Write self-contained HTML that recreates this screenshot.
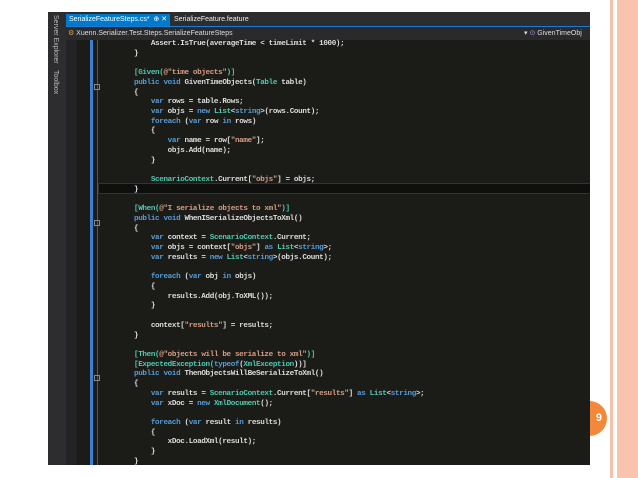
<!DOCTYPE html>
<html><head><style>
body{margin:0;width:638px;height:478px;background:#fff;position:relative;overflow:hidden;font-family:"Liberation Sans",sans-serif}
.s1{position:absolute;left:610px;top:0;width:3px;height:478px;background:#f6c0aa}
.s2{position:absolute;left:617px;top:0;width:21px;height:478px;background:#f9c3ad}
.circ{position:absolute;left:572px;top:401px;width:35px;height:35px;border-radius:50%;background:#f3883c;color:#fff;font:bold 11px "Liberation Sans";line-height:35px;text-align:right;box-sizing:border-box;padding-right:5px}
.shot{position:absolute;left:48px;top:12px;width:542px;height:453px;background:#1b1c18;overflow:hidden}
.top{position:absolute;left:0;top:0;width:542px;height:14px;background:#2d2d30}
.tab{position:absolute;left:18px;top:2px;width:104px;height:12px;background:#007acc;color:#fff;font-size:7px;line-height:12px;padding-left:3px;box-sizing:border-box}
.tab2{position:absolute;left:126px;top:2px;color:#eee;font-size:7px;line-height:12px}
.bl{position:absolute;left:18px;top:14px;width:524px;height:1px;background:#1c7bd0}
.nav{position:absolute;left:18px;top:15px;width:524px;height:13px;background:#2a2a2c;color:#ddd;font-size:7px;line-height:13px}
.side{position:absolute;left:0;top:0;width:18px;height:453px;background:#2d2d30}
.vt{position:absolute;left:4px;color:#bbb;font-size:7px;writing-mode:vertical-rl}
.mar{position:absolute;left:18px;top:28px;width:11px;height:425px;background:#232326}
.bar{position:absolute;left:42px;top:28px;width:3px;height:425px;background:#3c7fd4}
.ol{position:absolute;left:49px;top:28px;width:1px;height:425px;background:#555}
.cur{position:absolute;left:50px;top:171px;width:492px;height:9px;border:1px solid #333;background:#0f100e}
pre{position:absolute;left:86px;top:28px;margin:0;font:bold 7.6px/9.72px "Liberation Mono",monospace;letter-spacing:-0.35px;color:#dcdcdc}
.k{color:#569cd6}.s{color:#d69d85}.t{color:#4ec9b0}
.box{position:absolute;left:46px;width:6px;height:6px;border:1px solid #888;box-sizing:border-box}
</style></head><body>
<div class="s1"></div><div class="s2"></div>
<div class="circ">9</div>
<div class="shot">
<div class="top"></div>
<div class="tab">SerializeFeatureSteps.cs* &nbsp;⊕ ✕</div>
<div class="tab2">SerializeFeature.feature</div>
<div class="bl"></div>
<div class="nav">&nbsp;<span style="color:#d9a441">⚙</span> Xuenn.Serializer.Test.Steps.SerializeFeatureSteps<span style="position:absolute;left:458px">▾ <span style="color:#b48ee0">⊙</span> GivenTimeObj</span></div>
<div class="side"><div class="vt" style="top:3px">Server Explorer</div><div class="vt" style="top:58px">Toolbox</div></div>
<div class="mar"></div>
<div class="bar"></div><div class="ol"></div>
<div class="cur"></div>
<div class="box" style="top:72px"></div>
<div class="box" style="top:208px"></div>
<div class="box" style="top:363px"></div>
<pre>    Assert.IsTrue(averageTime &lt; timeLimit * 1000);
}

<span class="t">[Given(</span><span class="s">@"time objects"</span><span class="t">)]</span>
<span class="k">public void</span> GivenTimeObjects(<span class="t">Table</span> table)
{
    <span class="k">var</span> rows = table.Rows;
    <span class="k">var</span> objs = <span class="k">new</span> <span class="t">List</span>&lt;<span class="k">string</span>&gt;(rows.Count);
    <span class="k">foreach</span> (<span class="k">var</span> row <span class="k">in</span> rows)
    {
        <span class="k">var</span> name = row[<span class="s">"name"</span>];
        objs.Add(name);
    }

    <span class="t">ScenarioContext</span>.Current[<span class="s">"objs"</span>] = objs;
}

<span class="t">[When(</span><span class="s">@"I serialize objects to xml"</span><span class="t">)]</span>
<span class="k">public void</span> WhenISerializeObjectsToXml()
{
    <span class="k">var</span> context = <span class="t">ScenarioContext</span>.Current;
    <span class="k">var</span> objs = context[<span class="s">"objs"</span>] <span class="k">as</span> <span class="t">List</span>&lt;<span class="k">string</span>&gt;;
    <span class="k">var</span> results = <span class="k">new</span> <span class="t">List</span>&lt;<span class="k">string</span>&gt;(objs.Count);

    <span class="k">foreach</span> (<span class="k">var</span> obj <span class="k">in</span> objs)
    {
        results.Add(obj.ToXML());
    }

    context[<span class="s">"results"</span>] = results;
}

<span class="t">[Then(</span><span class="s">@"objects will be serialize to xml"</span><span class="t">)]</span>
<span class="t">[ExpectedException(</span><span class="k">typeof</span>(<span class="t">XmlException</span>))]
<span class="k">public void</span> ThenObjectsWillBeSerializeToXml()
{
    <span class="k">var</span> results = <span class="t">ScenarioContext</span>.Current[<span class="s">"results"</span>] <span class="k">as</span> <span class="t">List</span>&lt;<span class="k">string</span>&gt;;
    <span class="k">var</span> xDoc = <span class="k">new</span> <span class="t">XmlDocument</span>();

    <span class="k">foreach</span> (<span class="k">var</span> result <span class="k">in</span> results)
    {
        xDoc.LoadXml(result);
    }
}</pre>
</div>
</body></html>
